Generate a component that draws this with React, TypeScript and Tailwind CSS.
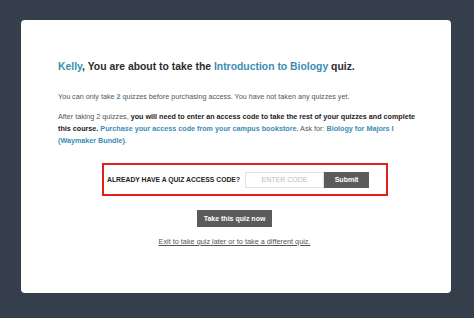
export default function App() {
  return (
    <div className="min-h-[318px] w-[474px] bg-[#353f4b] pt-[20px] pb-[25px] pl-[21px] font-['Liberation_Sans',Arial,sans-serif]">
      <div className="h-[273px] w-[430px] rounded-[4px] bg-white pl-[37px] pr-[28px] pt-[40px]">
        <h1 className="text-[10.4px] font-bold leading-[14px] text-[#2b2b2b]">
          <span className="text-[#3a8db3]">Kelly</span>, You are about to take the{" "}
          <span className="text-[#3a8db3]">Introduction to Biology</span> quiz.
        </h1>

        <p className="mt-[17px] text-[7.2px] leading-[12px] text-[#555]">
          You can only take <span className="font-bold text-[#3a8db3]">2</span> quizzes before
          purchasing access. You have not taken any quizzes yet.
        </p>

        <p className="mt-[8px] text-[7.2px] leading-[12px] text-[#555]">
          After taking 2 quizzes,{" "}
          <span className="font-bold text-[#222]">
            you will need to enter an access code to take the rest of your quizzes and complete
            this course.
          </span>{" "}
          <span className="font-bold text-[#3a8db3]">
            Purchase your access code from your campus bookstore.
          </span>{" "}
          Ask for: <span className="font-bold text-[#3a8db3]">Biology for Majors I (Waymaker Bundle)</span>.
        </p>

        <div className="ml-[44px] mt-[16px] flex h-[33px] w-[286px] items-center border-2 border-[#e0201c] pl-[3px]">
          <span className="text-[6.8px] font-bold leading-[10px] text-[#222]">
            ALREADY HAVE A QUIZ ACCESS CODE?
          </span>
          <div className="ml-[5px] flex h-[16px] w-[79px] items-center justify-center border border-[#e2e2e2] text-[7px] leading-[10px] text-[#bbb]">
            ENTER CODE
          </div>
          <button className="flex h-[16px] w-[45px] items-center justify-center bg-[#5b5b5b] text-[7px] font-bold leading-[10px] text-white">
            Submit
          </button>
        </div>

        <div className="mt-[14px] flex flex-col items-center pr-[12px]">
          <button className="flex h-[17px] w-[75px] items-center justify-center bg-[#5b5b5b] text-[7px] font-bold leading-[10px] text-white">
            Take this quiz now
          </button>
          <a className="mt-[10px] text-[7.3px] leading-[10px] text-[#555] underline">
            Exit to take quiz later or to take a different quiz.
          </a>
        </div>
      </div>
    </div>
  );
}
